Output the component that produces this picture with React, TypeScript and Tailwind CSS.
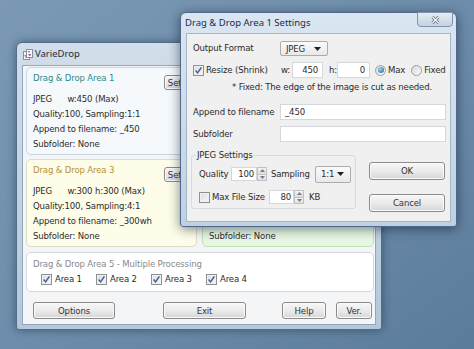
import type { ReactNode } from 'react'

const ui = "font-['DejaVu_Sans_Condensed','DejaVu_Sans',sans-serif] text-[9.5px] tracking-[-0.15px] text-[#2c2c2c] whitespace-nowrap"

function Btn({ label, className = '' }: { label: string; className?: string }) {
  return (
    <div className={`flex shrink-0 items-center justify-center rounded-[3px] border border-[#8a8a8a] bg-gradient-to-b from-[#f7f7f7] via-[#ebebeb] to-[#d6d6d6] leading-none text-[#333] shadow-[inset_0_0_0_1px_#fbfbfb] ${className}`}>
      {label}
    </div>
  )
}

function Check({ on }: { on?: boolean }) {
  return (
    <span className="flex h-[11px] w-[11px] shrink-0 items-center justify-center border border-[#8f9092] bg-gradient-to-br from-[#d9dde3] to-[#f6f7f9] shadow-[inset_0_0_0_1px_#eef0f3]">
      {on && (
        <svg width="9" height="9" viewBox="0 0 9 9">
          <path d="M1.6 4.6 L3.6 6.9 L7.4 1.4" fill="none" stroke="#4b5d8c" strokeWidth="1.5" />
        </svg>
      )}
    </span>
  )
}

function Radio({ on }: { on?: boolean }) {
  return (
    <span className="flex h-[11px] w-[11px] shrink-0 items-center justify-center rounded-full border border-[#9a9ea4] bg-gradient-to-br from-[#d6dadf] to-[#fafafa]">
      {on && <span className="h-[6px] w-[6px] rounded-full bg-[radial-gradient(circle_at_35%_35%,#9ad6f2,#1d5d86)]" />}
    </span>
  )
}

function Combo({ value, className = '' }: { value: string; className?: string }) {
  return (
    <div className={`flex shrink-0 items-center justify-between rounded-[2px] border border-[#acacac] bg-gradient-to-b from-[#fbfbfb] to-[#e9e9e9] pl-[5px] pr-[6px] ${className}`}>
      <span className="leading-none">{value}</span>
      <svg width="7" height="4" viewBox="0 0 7 4">
        <path d="M0 0H7L3.5 4Z" fill="#222" />
      </svg>
    </div>
  )
}

function Field({ value = '', right, className = '' }: { value?: string; right?: boolean; className?: string }) {
  return (
    <div className={`flex shrink-0 items-center border border-[#d4d8dd] bg-white px-[4px] leading-none ${right ? 'justify-end' : ''} ${className}`}>
      {value}
    </div>
  )
}

function Spin() {
  return (
    <div className="flex h-full w-[10px] shrink-0 flex-col">
      <div className="flex flex-1 items-center justify-center border border-[#c2c2c2] bg-gradient-to-b from-[#f4f4f4] to-[#dedede]">
        <svg width="5" height="3" viewBox="0 0 5 3"><path d="M0 3H5L2.5 0Z" fill="#6f7f90" /></svg>
      </div>
      <div className="flex flex-1 items-center justify-center border border-t-0 border-[#c2c2c2] bg-gradient-to-b from-[#f4f4f4] to-[#dedede]">
        <svg width="5" height="3" viewBox="0 0 5 3"><path d="M0 0H5L2.5 3Z" fill="#6f7f90" /></svg>
      </div>
    </div>
  )
}

// areas 2 and 4 sit mostly under the settings dialog, so only what shows is filled in
function Area({ title, tint, lines, className, button = true }: { title?: ReactNode; tint?: string; lines: string[]; className: string; button?: boolean }) {
  return (
    <div className={`h-[88px] rounded-[5px] border pl-[6px] pr-[3px] pt-[2px] ${className}`}>
      <div className="flex h-[15px] items-start justify-between leading-[15px]">
        <span className={tint}>{title}</span>
        {button && <Btn label="Set..." className="mt-[5px] h-[15px] w-[29px]" />}
      </div>
      <div className="mt-[6px] leading-[15px]">
        {lines.map((l, i) => (
          <div key={i} className="h-[15px] whitespace-pre">{l}</div>
        ))}
      </div>
    </div>
  )
}

function AppIcon() {
  return (
    <svg width="10" height="11" viewBox="0 0 10 11">
      <rect x="0.5" y="2.5" width="6" height="8" fill="#f4f4f4" stroke="#8a8fa0" />
      <rect x="3.5" y="0.5" width="6" height="8" fill="#ffffff" stroke="#8a8fa0" />
      <path d="M4.5 2 L6 4 L7.5 2Z" fill="#5cae3c" />
      <path d="M5 5 L8.5 5 L6.7 7.5Z" fill="#b04cc0" />
      <path d="M1.5 6 L3.5 6 L2.5 9Z" fill="#e05a9a" />
    </svg>
  )
}

function MainWindow() {
  return (
    <div className="absolute left-[16px] top-[42px] flex h-[288px] w-[366px] flex-col rounded-t-[6px] rounded-b-[3px] border border-[#536d88] bg-gradient-to-b from-[#d2dee9] via-[#c3d3e2] to-[#b3c8dc] shadow-[0_0_8px_rgba(20,40,60,0.5)]">
      <div className="flex h-[22px] shrink-0 items-center gap-[2px] pl-[6px]">
        <AppIcon />
        <span className="font-['Noto_Sans',sans-serif] text-[9.5px] text-[#1d2c3e]">VarieDrop</span>
      </div>
      <div className={`mx-[5px] flex h-[260px] flex-col border border-[#92a7bc] bg-[#f3f5f7] pl-[3px] pt-[1px] ${ui}`}>
        <div className="grid w-[348px] grid-cols-[171px_172px] gap-x-[5px] gap-y-[4px]">
          <Area
            title="Drag & Drop Area 1"
            tint="text-[#2f8b88]"
            className="border-[#c9d5e1] bg-[#f6f9fc]"
            lines={['JPEG      w:450 (Max)', 'Quality:100, Sampling:1:1', 'Append to filename: _450', 'Subfolder: None']}
          />
          <Area button={false} className="border-[#c9d5e1] bg-[#f3f6fb]" lines={[]} />
          <Area
            title="Drag & Drop Area 3"
            tint="text-[#b39236]"
            className="border-[#dedcc4] bg-[#fdfde9]"
            lines={['JPEG      w:300 h:300 (Max)', 'Quality:100, Sampling:4:1', 'Append to filename: _300wh', 'Subfolder: None']}
          />
          <Area button={false} className="border-[#bfe0b6] bg-[#e7f7e2]" lines={['', '', '', 'Subfolder: None']} />
        </div>
        <div className="mt-[5px] h-[40px] w-[348px] rounded-[5px] border border-[#d6d9dd] bg-white pl-[6px] pt-[3px]">
          <div className="leading-[15px] text-[#8a8a8a]">Drag &amp; Drop Area 5 - Multiple Processing</div>
          <div className="mt-[1px] flex h-[15px] items-center pl-[8px]">
            {['Area 1', 'Area 2', 'Area 3', 'Area 4'].map(a => (
              <div key={a} className="flex w-[55px] items-center gap-[3px]">
                <Check on />
                <span>{a}</span>
              </div>
            ))}
          </div>
        </div>
        <div className="mt-[10px] flex h-[17px]">
          <Btn label="Options" className="ml-[7px] w-[82px]" />
          <Btn label="Exit" className="ml-[48px] w-[83px]" />
          <Btn label="Help" className="ml-[36px] w-[44px]" />
          <Btn label="Ver." className="ml-[10px] w-[36px]" />
        </div>
      </div>
    </div>
  )
}

function SettingsDialog() {
  return (
    <div className="absolute left-[180px] top-[12px] flex h-[215px] w-[277px] flex-col rounded-t-[6px] rounded-b-[3px] border border-[#50698a] bg-gradient-to-b from-[#dae6f1] via-[#cddcea] to-[#bed1e3] shadow-[0_2px_12px_rgba(10,25,45,0.55)]">
      <div className="relative flex h-[20px] shrink-0 items-center pl-[4px]">
        <span className="font-['Noto_Sans',sans-serif] text-[9.5px] text-[#1d2c3e]">Drag &amp; Drop Area 1 Settings</span>
        <div className="absolute right-[3px] top-[-1px] flex h-[15px] w-[36px] items-center justify-center rounded-b-[4px] border border-[#8093aa] bg-gradient-to-b from-[#e4ecf4] to-[#c3d3e3]">
          <svg width="9" height="8" viewBox="0 0 9 8">
            <path d="M1.5 1 L7.5 7 M7.5 1 L1.5 7" stroke="#4d5c70" strokeWidth="2.6" />
            <path d="M1.5 1 L7.5 7 M7.5 1 L1.5 7" stroke="#ffffff" strokeWidth="1.3" />
          </svg>
        </div>
      </div>
      <div className={`mx-[5px] flex h-[189px] flex-col border border-[#a5b6c8] bg-[#f0f0f0] ${ui}`}>
        <div className="mt-[7px] flex h-[15px] items-center pl-[6px]">
          <span className="w-[87px] shrink-0">Output Format</span>
          <Combo value="JPEG" className="h-[15px] w-[48px]" />
        </div>
        <div className="mt-[6px] flex h-[16px] items-center pl-[6px]">
          <div className="flex w-[88px] shrink-0 items-center gap-[2px]">
            <Check on />
            <span>Resize (Shrink)</span>
          </div>
          <span className="w-[11px] shrink-0">w:</span>
          <Field value="450" right className="h-[16px] w-[31px]" />
          <span className="ml-[6px] w-[8px] shrink-0">h:</span>
          <Field value="0" right className="h-[16px] w-[33px]" />
          <span className="ml-[5px] flex items-center gap-[2px]">
            <Radio on />
            <span>Max</span>
          </span>
          <span className="ml-[6px] flex items-center gap-[2px]">
            <Radio />
            <span>Fixed</span>
          </span>
        </div>
        <div className="mt-[2px] h-[13px] pl-[45px] leading-[13px]">* Fixed: The edge of the image is cut as needed.</div>
        <div className="mt-[11px] flex h-[16px] items-center pl-[6px]">
          <span className="w-[87px] shrink-0">Append to filename</span>
          <Field value="_450" className="h-[16px] w-[166px]" />
        </div>
        <div className="mt-[6px] flex h-[16px] items-center pl-[6px]">
          <span className="w-[87px] shrink-0">Subfolder</span>
          <Field className="h-[16px] w-[166px]" />
        </div>
        <div className="mt-[6px] flex pl-[4px]">
          <fieldset className="h-[61px] w-[165px] rounded-[3px] border border-[#d5dbe1]">
            <legend className="ml-[4px] px-[1px] leading-[14px]">JPEG Settings</legend>
            <div className="mt-[5px] flex h-[14px] items-center pl-[7px]">
              <span className="w-[32px] shrink-0">Quality</span>
              <Field value="100" right className="h-[14px] w-[26px] pr-[2px]" />
              <Spin />
              <span className="ml-[4px] w-[44px] shrink-0">Sampling</span>
              <Combo value="1:1" className="h-[17px] w-[36px] pl-[4px] pr-[4px]" />
            </div>
            <div className="mt-[9px] flex h-[14px] items-center pl-[7px]">
              <div className="flex w-[70px] shrink-0 items-center gap-[2px]">
                <Check />
                <span>Max File Size</span>
              </div>
              <Field value="80" right className="h-[14px] w-[25px] pr-[2px]" />
              <Spin />
              <span className="ml-[5px]">KB</span>
            </div>
          </fieldset>
          <div className="ml-[13px] flex flex-col">
            <Btn label="OK" className="mt-[14px] h-[18px] w-[76px]" />
            <Btn label="Cancel" className="mt-[14px] h-[18px] w-[76px]" />
          </div>
        </div>
      </div>
    </div>
  )
}

export default function App() {
  return (
    <div className="relative h-[349px] w-[474px] overflow-hidden bg-gradient-to-br from-[#7b99b4] via-[#6d8dab] to-[#5c7c9b]">
      <MainWindow />
      <SettingsDialog />
    </div>
  )
}
